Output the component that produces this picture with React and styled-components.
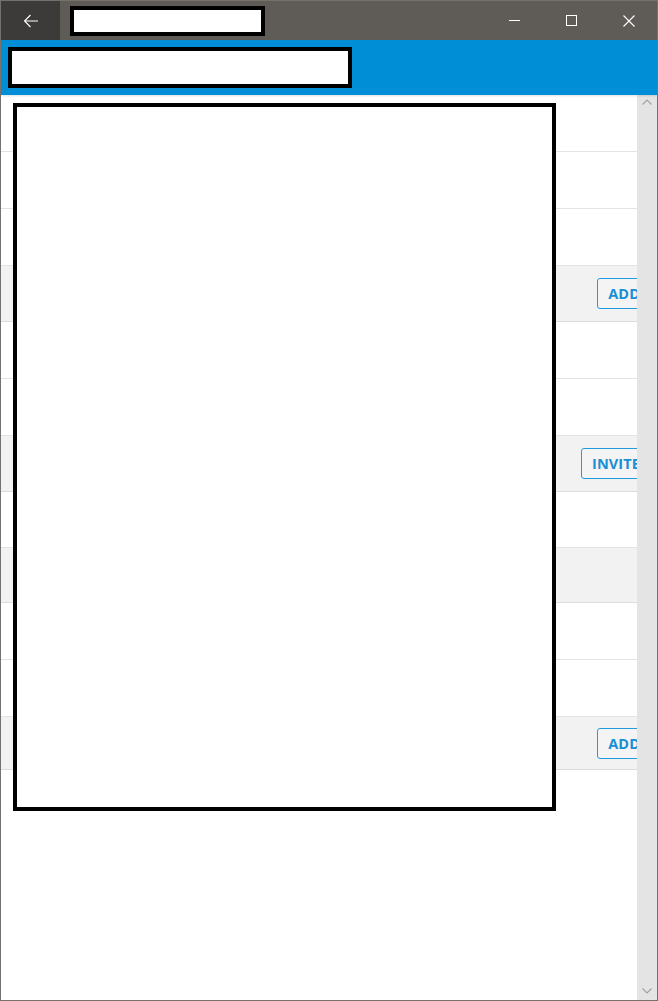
import styled, { createGlobalStyle } from 'styled-components';

const GlobalStyle = createGlobalStyle`
  html, body {
    margin: 0;
    padding: 0;
    background: #ffffff;
    font-family: "Open Sans", "Noto Sans", "Liberation Sans", sans-serif;
  }
  * {
    box-sizing: border-box;
  }
`;

const Window = styled.div`
  width: 658px;
  height: 1001px;
  display: flex;
  flex-direction: column;
  border: 1px solid #75716d;
  overflow: hidden;
  background: #ffffff;
`;

const TitleBar = styled.div`
  height: 39px;
  display: flex;
  align-items: stretch;
  background: #5f5b57;
  flex-shrink: 0;
`;

const BackButton = styled.div`
  width: 59px;
  display: flex;
  align-items: center;
  justify-content: center;
  background: #3d3b39;
`;

const Redaction = styled.div`
  background: #ffffff;
  border: 4px solid #000000;
  width: ${(p) => p.$w}px;
  height: ${(p) => p.$h}px;
`;

const TitleRedaction = styled(Redaction)`
  margin: 5px 0 0 10px;
`;

const Spacer = styled.div`
  flex: 1;
`;

const CaptionButton = styled.div`
  width: 57px;
  display: flex;
  align-items: center;
  justify-content: center;
`;

const Header = styled.div`
  height: 55px;
  flex-shrink: 0;
  background: #008ed6;
  padding: 7px 0 0 7px;
  position: relative;
  z-index: 2;
  box-shadow: 0 1px 2px rgba(0, 0, 0, 0.12);
`;

const Body = styled.div`
  flex: 1;
  display: flex;
  position: relative;
  min-height: 0;
`;

const Viewport = styled.div`
  flex: 1;
  overflow: hidden;
`;

const ListInner = styled.div`
  width: 664px;
`;

const Row = styled.div`
  height: ${(p) => p.$h || 57}px;
  border-bottom: 1px solid #e3e3e3;
  background: #ffffff;
`;

const SectionRow = styled.div`
  height: ${(p) => p.$h || 55}px;
  border-bottom: 1px solid #dcdcdc;
  background: #f2f2f2;
  display: flex;
  align-items: center;
  justify-content: flex-end;
  padding-right: 14px;
`;

const OutlineButton = styled.div`
  height: 31px;
  padding: 0 10px;
  display: flex;
  align-items: center;
  border: 1px solid #1f9be0;
  border-radius: 3px;
  color: #1a8fd6;
  font-size: 14.5px;
  font-weight: 700;
  letter-spacing: 0.1px;
  background: #f4f4f4;
`;

const Scrollbar = styled.div`
  width: 20px;
  flex-shrink: 0;
  background: #e4e4e4;
  display: flex;
  flex-direction: column;
  justify-content: space-between;
  align-items: center;
  padding: 4px 0 6px;
`;

const ContentRedaction = styled(Redaction)`
  position: absolute;
  left: 12px;
  top: 8px;
  z-index: 3;
`;

const Arrow = () => (
  <svg width="16" height="14" viewBox="0 0 16 14" fill="none" stroke="#ffffff" strokeWidth="1.1">
    <path d="M15 7H1.5M7.5 1L1.5 7l6 6" />
  </svg>
);

const Minimize = () => (
  <svg width="11" height="11" viewBox="0 0 11 11" stroke="#ffffff" strokeWidth="1">
    <path d="M0 5.5h11" />
  </svg>
);

const Maximize = () => (
  <svg width="11" height="11" viewBox="0 0 11 11" fill="none" stroke="#ffffff" strokeWidth="1">
    <rect x="0.5" y="0.5" width="10" height="10" />
  </svg>
);

const Close = () => (
  <svg width="12" height="12" viewBox="0 0 12 12" stroke="#ffffff" strokeWidth="1.1">
    <path d="M0.5 0.5l11 11M11.5 0.5l-11 11" />
  </svg>
);

const Chevron = ({ down }) => (
  <svg width="10" height="6" viewBox="0 0 10 6" fill="none" stroke="#a2a2a2" strokeWidth="1.2">
    <path d={down ? 'M0.5 0.5L5 5l4.5-4.5' : 'M0.5 5.5L5 1l4.5 4.5'} />
  </svg>
);

const rows = [
  { kind: 'row' },
  { kind: 'row' },
  { kind: 'row' },
  { kind: 'section', action: 'ADD', h: 56 },
  { kind: 'row' },
  { kind: 'row' },
  { kind: 'section', action: 'INVITE', h: 56 },
  { kind: 'row', h: 56 },
  { kind: 'section', h: 55 },
  { kind: 'row' },
  { kind: 'row' },
  { kind: 'section', action: 'ADD', h: 53 },
];

const App = () => {
  return (
    <>
      <GlobalStyle />
      <Window>
        <TitleBar>
          <BackButton>
            <Arrow />
          </BackButton>
          <TitleRedaction $w={195} $h={30} />
          <Spacer />
          <CaptionButton>
            <Minimize />
          </CaptionButton>
          <CaptionButton>
            <Maximize />
          </CaptionButton>
          <CaptionButton>
            <Close />
          </CaptionButton>
        </TitleBar>
        <Header>
          <Redaction $w={344} $h={41} />
        </Header>
        <Body>
          <Viewport>
            <ListInner>
              {rows.map((r, i) =>
                r.kind === 'row' ? (
                  <Row key={i} $h={r.h} />
                ) : (
                  <SectionRow key={i} $h={r.h}>
                    {r.action && <OutlineButton>{r.action}</OutlineButton>}
                  </SectionRow>
                )
              )}
            </ListInner>
          </Viewport>
          <Scrollbar>
            <Chevron />
            <Chevron down />
          </Scrollbar>
          <ContentRedaction $w={543} $h={708} />
        </Body>
      </Window>
    </>
  );
};

export default App;
